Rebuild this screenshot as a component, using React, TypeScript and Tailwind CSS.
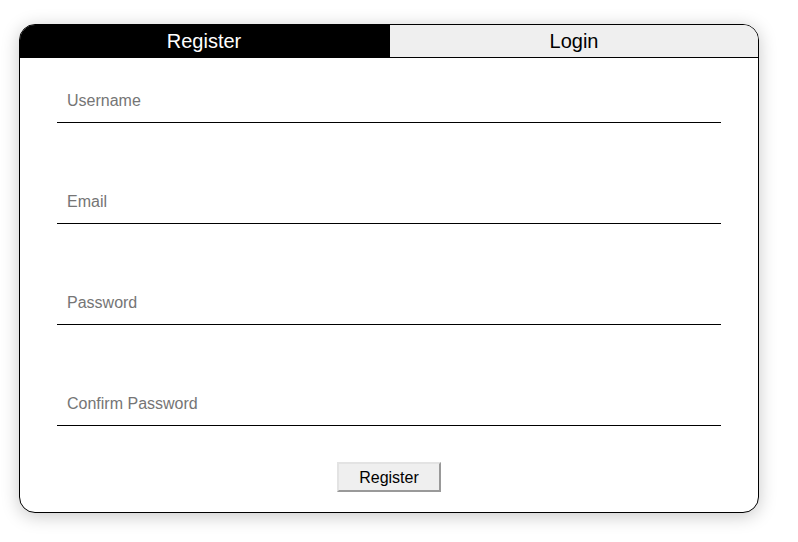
import React from 'react';

const fields = [
  { name: "username", type: "text", placeholder: "Username" },
  { name: "email", type: "email", placeholder: "Email" },
  { name: "password", type: "password", placeholder: "Password" },
  { name: "confirm", type: "password", placeholder: "Confirm Password" },
];

export default function App() {
  return (
    <div className="min-h-[542px] w-[798px] bg-white pt-[24px] pl-[19px] font-['Liberation_Sans',Arial,sans-serif]">
      <div className="w-[740px] h-[489px] rounded-[16px] border border-black bg-white overflow-hidden shadow-[0_3px_18px_rgba(0,0,0,0.22)] flex flex-col">
        {/* tabs */}
        <div className="flex h-[33px] border-b border-black">
          <button className="w-[370px] pr-[2px] bg-black text-white text-[20px] leading-[33px]">Register</button>
          <button className="flex-1 bg-[#efefef] text-black text-[20px] leading-[33px]">Login</button>
        </div>

        {/* form */}
        <form className="flex flex-col px-[37px] pt-[21px]">
          {fields.map((f, i) => (
            <input
              key={f.name}
              type={f.type}
              name={f.name}
              placeholder={f.placeholder}
              className={
                "h-[44px] w-full border-b border-black px-[10px] text-[16px] outline-none placeholder:text-[#757575] " +
                (i > 0 ? "mt-[57px]" : "")
              }
            />
          ))}
          <div className="flex justify-center mt-[36px]">
            <button
              type="button"
              className="w-[104px] h-[30px] pt-[1px] bg-[#efefef] text-[16px] text-black border-2 border-t-[#e3e3e3] border-l-[#e3e3e3] border-b-[#999] border-r-[#999]"
            >
              Register
            </button>
          </div>
        </form>
      </div>
    </div>
  );
}
